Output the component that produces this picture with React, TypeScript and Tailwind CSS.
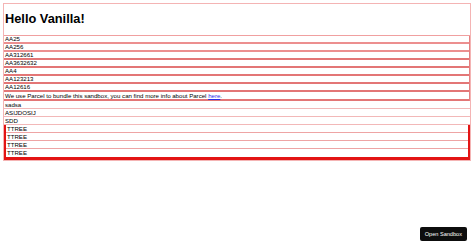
const groupA = ["AA25", "AA256", "AA312661", "AA3632632", "AA4", "AA123213", "AA12616"];
const groupB = ["sadsa", "ASIJDOSIJ", "SDD"];
const groupC = ["TTREE", "TTREE", "TTREE", "TTREE"];

export default function App() {
  return (
    <div className="relative h-[248px] w-[474px] overflow-hidden bg-white font-['Liberation_Sans',Arial,sans-serif] text-black">
      {/* app root */}
      <div className="mx-[3px] mt-[3px] border border-[#f4b4b4]">
        <div className="flex h-[32px] items-center border-b border-[#f0a0a0] pl-[1px]">
          <h1 className="text-[12.8px] font-bold leading-none">Hello Vanilla!</h1>
        </div>

        <div className="border-r border-[#e48080]">
          {groupA.map((t, i) => (
            <div
              key={i}
              className={`h-[8px] border-b-2 pl-[1px] text-[6.1px] leading-[6px] ${
                i < 2 ? "border-[#ec8f8f]" : "border-[#e37676]"
              }`}
            >
              {t}
            </div>
          ))}
          <div className="h-[9px] border-b-2 border-[#e37676] pl-[1px] text-[6.1px] leading-[7px]">
            We use Parcel to bundle this sandbox, you can find more info about Parcel{" "}
            <a href="#" className="text-[#2a2ae8] underline decoration-[0.5px]">
              here
            </a>
            .
          </div>
        </div>

        {groupB.map((t, i) => (
          <div
            key={i}
            className="h-[8px] border-b border-[#f2b8b8] pl-[1px] text-[6.1px] leading-[7px]"
          >
            {t}
          </div>
        ))}

        <div className="border-b-[3px] border-l-2 border-r-2 border-[#e31414]">
          {groupC.map((t, i) => (
            <div
              key={i}
              className="h-[8px] border-b border-[#eea4a4] pl-[1px] text-[6.1px] leading-[7px] last:border-b-0"
            >
              {t}
            </div>
          ))}
        </div>
      </div>

      {/* Open Sandbox badge */}
      <div className="absolute bottom-[7px] right-[7px] rounded-[2px] bg-[#0d0d0d] px-[5px] py-[3px] text-[5.6px] leading-[8px] text-white">
        Open Sandbox
      </div>
    </div>
  );
}
